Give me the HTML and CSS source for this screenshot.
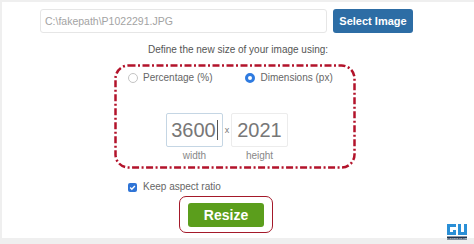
FILE: index.html
```html
<!DOCTYPE html>
<html lang="en">
<head>
    <meta charset="UTF-8">
    <title>Resize Image</title>
    <link rel="stylesheet" href="styles.css">
</head>
<body>
    <div class="page">
        <div class="file-row">
            <div class="file-input">C:\fakepath\P1022291.JPG</div>
            <button class="select-btn">Select Image</button>
        </div>

        <p class="caption">Define the new size of your image using:</p>

        <div class="size-box">
            <svg class="dash-frame" width="242" height="105" viewBox="0 0 242 105">
                <rect x="1.5" y="1.5" width="239" height="102" rx="13" ry="13" fill="none" stroke="#b3132b" stroke-width="2.5" stroke-dasharray="7 2.5 2 2.5"/>
            </svg>
            <div class="modes">
                <label class="mode"><span class="radio"></span>Percentage (%)</label>
                <label class="mode mode-dim"><span class="radio radio-on"></span>Dimensions (px)</label>
            </div>
            <div class="dims">
                <div class="dim">
                    <div class="dim-input active">3600<span class="caret"></span></div>
                    <span class="dim-label">width</span>
                </div>
                <span class="times">x</span>
                <div class="dim">
                    <div class="dim-input">2021</div>
                    <span class="dim-label">height</span>
                </div>
            </div>
        </div>

        <label class="keep">
            <span class="check">
                <svg width="9" height="9" viewBox="0 0 9 9"><path d="M2.2 4.6 L3.8 6.2 L6.9 2.9" fill="none" stroke="#fff" stroke-width="1.4"/></svg>
            </span>
            Keep aspect ratio
        </label>

        <div class="resize-frame">
            <button class="resize-btn">Resize</button>
        </div>
    </div>

    <div class="logo">
        <svg width="24" height="18" viewBox="0 0 24 18">
            <path d="M1 1 H10 V4 H4 V9 H7 V7 H10 V12 H1 Z" fill="#2a8fd6"/>
            <path d="M12 1 H15 V9 H18 V1 H21 V12 H12 Z" fill="#2a8fd6"/>
            <rect x="1" y="13.5" width="20" height="3" fill="#1f3550"/>
            <text x="11" y="15.9" font-size="2.4" fill="#fff" text-anchor="middle" font-family="Liberation Sans">GADGETS TO USE</text>
        </svg>
    </div>
</body>
</html>
```

FILE: styles.css
```css
body {
    margin: 0;
    background-color: #efefef;
    font-family: "Liberation Sans", Arial, sans-serif;
}
.page {
    position: relative;
    margin: 2px 0 0 2px;
    height: 236px;
    background-color: #fff;
    display: flex;
    flex-direction: column;
}
.file-row {
    display: flex;
    gap: 6px;
    margin: 7px 0 0 38px;
}
.file-input {
    width: 281px;
    height: 22px;
    padding-left: 4px;
    border: 1px solid #e6e6e6;
    border-radius: 3px;
    color: #a3a3a3;
    font-size: 10.5px;
    line-height: 22px;
}
.select-btn {
    width: 80px;
    height: 24px;
    padding: 0;
    border: none;
    border-radius: 3px;
    background-color: #2d6da5;
    color: #fff;
    font-family: inherit;
    font-size: 11px;
    font-weight: bold;
    white-space: nowrap;
}
.caption {
    margin: 10px 0 0;
    text-align: center;
    color: #555;
    font-size: 10px;
    line-height: 14px;
}
.size-box {
    position: relative;
    width: 240px;
    height: 103px;
    margin: 8px 0 0 113px;
    box-sizing: border-box;
    padding-top: 6px;
}
.dash-frame {
    position: absolute;
    left: -1px;
    top: -1px;
}
.modes {
    display: flex;
    padding-left: 13px;
    color: #666;
    font-size: 10px;
    line-height: 14px;
}
.mode {
    display: flex;
    align-items: center;
    gap: 5px;
}
.mode-dim {
    margin-left: 33px;
}
.radio {
    width: 8px;
    height: 8px;
    border: 1px solid #c4c4c4;
    border-radius: 50%;
}
.radio-on {
    width: 4px;
    height: 4px;
    border: 3px solid #2f7be0;
}
.dims {
    display: flex;
    align-items: flex-start;
    margin: 28px 0 0 51px;
}
.dim {
    display: flex;
    flex-direction: column;
    align-items: center;
}
.dim-input {
    width: 55px;
    height: 32px;
    border: 1px solid #ececec;
    border-radius: 2px;
    color: #777;
    font-size: 20px;
    line-height: 32px;
    text-align: center;
}
.dim-input.active {
    border-color: #c5d6e4;
}
.caret {
    display: inline-block;
    width: 1px;
    height: 20px;
    margin-left: 1px;
    vertical-align: -3px;
    background-color: #555;
}
.dim-label {
    margin-top: 3px;
    color: #888;
    font-size: 10px;
    line-height: 12px;
}
.times {
    width: 8px;
    margin-top: 12px;
    text-align: center;
    color: #777;
    font-size: 9px;
}
.keep {
    display: flex;
    align-items: center;
    gap: 6px;
    margin: 12px 0 0 126px;
    color: #666;
    font-size: 10px;
    line-height: 14px;
}
.check {
    display: flex;
    width: 9px;
    height: 9px;
    border-radius: 2px;
    background-color: #2f74d6;
}
.resize-frame {
    width: 92px;
    height: 35px;
    margin: 2px 0 0 177px;
    border: 1.5px solid #a4192a;
    border-radius: 7px;
    display: flex;
    justify-content: center;
    align-items: center;
}
.resize-btn {
    width: 76px;
    height: 24px;
    border: none;
    border-radius: 3px;
    background-color: #5b9e1c;
    color: #fff;
    font-family: inherit;
    font-size: 14px;
    font-weight: bold;
}
.logo {
    position: absolute;
    left: 446px;
    top: 223px;
    width: 24px;
    height: 18px;
}
```
